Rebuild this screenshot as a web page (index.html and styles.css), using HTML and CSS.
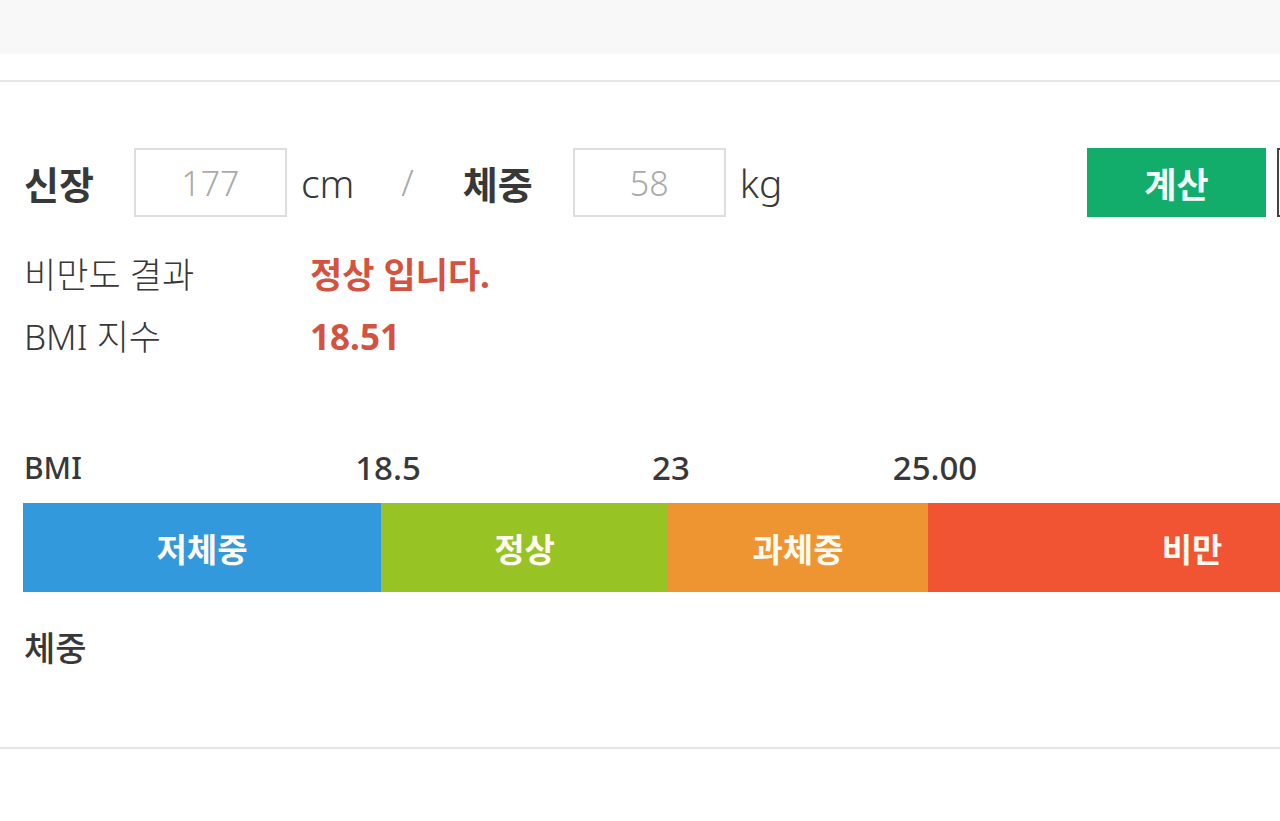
FILE: index.html
```html
<!DOCTYPE html>
<html lang="ko">
  <head>
    <meta charset="utf-8">
    <title>BMI 계산기</title>
    <link rel="stylesheet" href="styles.css">
  </head>
  <body>
    <div class="topbar"></div>
    <section class="calc">
      <form class="form-row" onsubmit="return false">
        <label class="field-label" for="height">신장</label>
        <input class="num" type="text" id="height" placeholder="177">
        <span class="unit">cm</span>
        <span class="slash">/</span>
        <label class="field-label" for="weight">체중</label>
        <input class="num" type="text" id="weight" placeholder="58">
        <span class="unit">kg</span>
        <div class="buttons">
          <button class="btn btn-calc" type="submit">계산</button>
          <button class="btn btn-reset" type="reset" aria-label="다시"></button>
        </div>
      </form>

      <div class="result">
        <div class="result-label">비만도 결과</div>
        <div class="result-value">정상 입니다.</div>
        <div class="result-label">BMI 지수</div>
        <div class="result-value">18.51</div>
      </div>

      <div class="scale">
        <div class="tick seg-under"><span class="scale-title">BMI</span><span class="tick-num">18.5</span></div>
        <div class="tick seg-normal"><span class="tick-num tick-23">23</span></div>
        <div class="tick seg-over"><span class="tick-num">25.00</span></div>
        <div class="tick seg-obese"></div>
      </div>
      <div class="bar">
        <div class="seg seg-under">저체중</div>
        <div class="seg seg-normal">정상</div>
        <div class="seg seg-over">과체중</div>
        <div class="seg seg-obese">비만</div>
      </div>

      <div class="weight-title">체중</div>
    </section>
  </body>
</html>
```

FILE: styles.css
```css
html, body {
  margin: 0;
  overflow: hidden;
}

body {
  font-family: "Noto Sans", "Noto Sans CJK KR", sans-serif;
  color: #383838;
  background: #fff;
}

.topbar {
  height: 54px;
  background: #f8f8f8;
}

.calc {
  margin-top: 26px;
  border-top: 2px solid #e6e6e6;
  border-bottom: 2px solid #e6e6e6;
  padding: 0 24px 79px 23px;
  width: 1433px;
}

.form-row {
  display: flex;
  align-items: center;
  margin-top: 66px;
  height: 69px;
}

.field-label {
  font-size: 38px;
  font-weight: 700;
  margin-left: 1px;
  margin-right: 40px;
}

.num {
  box-sizing: border-box;
  width: 153px;
  height: 69px;
  border: 2px solid #dedede;
  font-family: inherit;
  font-size: 34px;
  font-weight: 300;
  text-align: center;
  color: #333;
  padding: 0;
}

.num::placeholder {
  color: #aaa;
}

.unit {
  font-size: 39px;
  font-weight: 300;
  margin-left: 14px;
}

.slash {
  font-size: 36px;
  font-weight: 300;
  color: #aaa;
  margin: 0 48px 0 47px;
}

.buttons {
  display: flex;
  gap: 11px;
  margin-left: auto;
}

.btn {
  box-sizing: border-box;
  width: 179px;
  height: 69px;
  font-family: inherit;
  font-size: 35px;
  font-weight: 700;
  cursor: pointer;
}

.btn-calc {
  background: #12ad6b;
  color: #f3fff8;
  border: none;
}

.btn-reset {
  background: #fff;
  color: #333;
  border: 2px solid #444;
}

.result {
  display: grid;
  grid-template-columns: 287px auto;
  margin-top: 27px;
  line-height: 62px;
  font-size: 35px;
}

.result-label {
  font-weight: 300;
  margin-left: 1px;
}

.result-value {
  font-weight: 700;
  color: #d35240;
}

.scale {
  display: flex;
  margin-top: 80px;
  height: 40px;
  line-height: 40px;
  font-size: 33px;
  font-weight: 500;
}

.tick {
  display: flex;
}

.tick-num {
  margin-left: auto;
  transform: translateX(calc(50% + 7px));
}

.tick-23 {
  transform: translateX(calc(50% + 3px));
}

.scale-title {
  font-size: 30px;
  margin-left: 1px;
}

.bar {
  display: flex;
  margin-top: 15px;
  height: 89px;
}

.seg {
  display: flex;
  align-items: center;
  justify-content: center;
  color: #fffaf0;
  font-size: 33px;
  font-weight: 700;
}

.seg-under { width: 358px; }
.seg-normal { width: 287px; }
.seg-over { width: 260px; }
.seg-obese { width: 528px; }

.bar .seg-under { background: #3399dd; }
.bar .seg-normal { background: #97c424; }
.bar .seg-over { background: #ee9430; }
.bar .seg-obese { background: #f05433; }

.weight-title {
  margin-top: 36px;
  margin-left: 1px;
  line-height: 40px;
  font-size: 34px;
  font-weight: 500;
}
```
